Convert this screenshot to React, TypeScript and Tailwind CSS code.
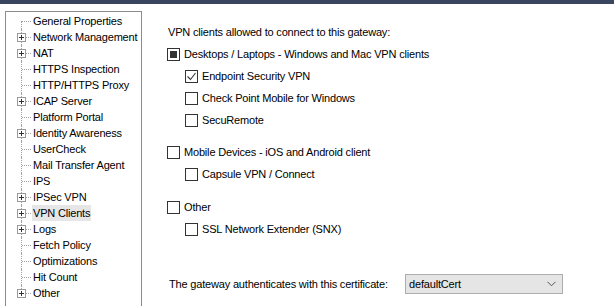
import { ReactNode } from "react";

type TreeItem = { label: string; expandable?: boolean; selected?: boolean };

const TREE: TreeItem[] = [
  { label: "General Properties" },
  { label: "Network Management", expandable: true },
  { label: "NAT", expandable: true },
  { label: "HTTPS Inspection" },
  { label: "HTTP/HTTPS Proxy" },
  { label: "ICAP Server", expandable: true },
  { label: "Platform Portal" },
  { label: "Identity Awareness", expandable: true },
  { label: "UserCheck" },
  { label: "Mail Transfer Agent" },
  { label: "IPS" },
  { label: "IPSec VPN", expandable: true },
  { label: "VPN Clients", expandable: true, selected: true },
  { label: "Logs", expandable: true },
  { label: "Fetch Policy" },
  { label: "Optimizations" },
  { label: "Hit Count" },
  { label: "Other", expandable: true },
];

function TreeRow({ item, first, last }: { item: TreeItem; first: boolean; last: boolean }) {
  return (
    <div className="relative flex h-4 items-center whitespace-nowrap pl-[26px]">
      {/* tree connector lines */}
      <span
        className={`absolute left-[15px] w-0 border-l border-dotted border-[#a0a0a0] ${first ? "top-2" : "top-0"} ${last ? "h-2" : first ? "bottom-0" : "h-4"}`}
      />
      <span className="absolute left-[16px] top-2 h-0 w-[9px] border-t border-dotted border-[#a0a0a0]" />
      {item.expandable && (
        <span className="absolute left-[11px] top-[4px] flex h-[9px] w-[9px] items-center justify-center border border-[#9a9a9a] bg-white">
          <svg width="5" height="5" viewBox="0 0 5 5">
            <path d="M0 2.5h5M2.5 0v5" stroke="#333" strokeWidth="1" />
          </svg>
        </span>
      )}
      <span className={`px-[1px] leading-4 ${item.selected ? "bg-[#e6e6e6]" : ""}`}>{item.label}</span>
    </div>
  );
}

function Box({ state }: { state: "off" | "on" | "mixed" }) {
  return (
    <span className="flex h-[13px] w-[13px] shrink-0 items-center justify-center border border-[#333] bg-white">
      {state === "mixed" && <span className="h-[7px] w-[7px] bg-[#333]" />}
      {state === "on" && (
        <svg width="11" height="11" viewBox="0 0 11 11">
          <path d="M1.5 5.5l3 3 5-6.5" fill="none" stroke="#333" strokeWidth="1.1" />
        </svg>
      )}
    </span>
  );
}

function Check({ state = "off", indent, children }: { state?: "off" | "on" | "mixed"; indent?: boolean; children: ReactNode }) {
  return (
    <div className={`flex h-[22px] items-center gap-[4px] ${indent ? "pl-[18px]" : ""}`}>
      <Box state={state} />
      <span>{children}</span>
    </div>
  );
}

export default function App() {
  return (
    <div
      className="h-[306px] w-[614px] overflow-hidden bg-white text-[11px] tracking-[-0.18px] text-black"
      style={{ fontFamily: '"Liberation Sans", Arial, sans-serif' }}
    >
      <div className="h-[4px] bg-[#3a4660]" />
      <div className="flex">
        <div className="ml-[5px] mt-[7px] h-[320px] w-[137px] border border-b-0 border-[#8c8c8c] pt-[1px]">
          {TREE.map((t, i) => (
            <TreeRow key={t.label} item={t} first={i === 0} last={i === TREE.length - 1} />
          ))}
        </div>
        <div className="ml-[25px] flex-1 pt-[20px]">
          <p className="pl-[1px] leading-4">VPN clients allowed to connect to this gateway:</p>
          <div className="mt-[3px]">
            <Check state="mixed">Desktops / Laptops - Windows and Mac VPN clients</Check>
            <Check state="on" indent>Endpoint Security VPN</Check>
            <Check indent>Check Point Mobile for Windows</Check>
            <Check indent>SecuRemote</Check>
          </div>
          <div className="mt-[10px]">
            <Check>Mobile Devices - iOS and Android client</Check>
            <Check indent>Capsule VPN / Connect</Check>
          </div>
          <div className="mt-[11px]">
            <Check>Other</Check>
            <Check indent>SSL Network Extender (SNX)</Check>
          </div>
          <div className="mt-[34px] flex items-center">
            <span className="w-[238px] pl-[2px]">The gateway authenticates with this certificate:</span>
            <div className="flex h-[20px] w-[158px] items-center justify-between border border-[#adadad] bg-[#e5e5e5] pl-[3px] pr-[6px]">
              <span>defaultCert</span>
              <svg width="9" height="6" viewBox="0 0 9 6">
                <path d="M0.5 0.8l4 4 4-4" fill="none" stroke="#555" strokeWidth="1" />
              </svg>
            </div>
          </div>
        </div>
      </div>
    </div>
  );
}
